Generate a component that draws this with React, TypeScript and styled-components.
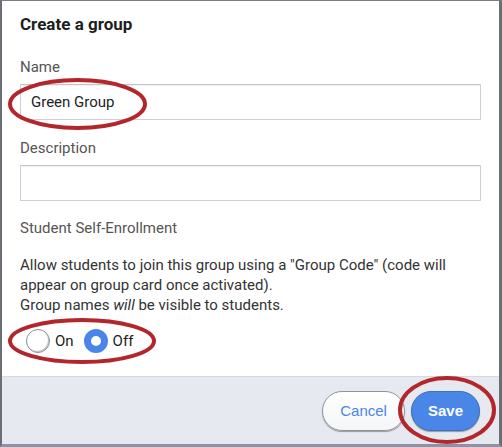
import React, { useState } from "react";
import styled, { createGlobalStyle } from "styled-components";

const GlobalStyle = createGlobalStyle`
  html, body {
    margin: 0;
    padding: 0;
    background: #fff;
  }
  body {
    font-family: Roboto, "Liberation Sans", Arial, sans-serif;
  }
`;

const Frame = styled.div`
  position: relative;
  width: 502px;
  height: 447px;
  box-sizing: border-box;
  border-top: 1px solid #7a7e84;
  border-left: 2px solid #6b6f75;
  border-right: 3px solid #6b6f75;
  border-bottom: 3px solid #8a94a8;
  display: flex;
  flex-direction: column;
  background: #fff;
  overflow: hidden;
`;

const Body = styled.div`
  flex: 1;
  padding: 12px 18px 0 18px;
  display: flex;
  flex-direction: column;
`;

const Title = styled.h2`
  margin: 0;
  font-size: 17px;
  font-weight: 700;
  color: #1e1e1e;
  line-height: 22px;
`;

const Label = styled.div<{ $top: number }>`
  margin-top: ${(p) => p.$top}px;
  font-size: 15px;
  color: #555;
  line-height: 18px;
`;

const Input = styled.input`
  box-sizing: border-box;
  margin-top: 8px;
  width: 461px;
  height: 36px;
  padding: 0 10px;
  border: 1px solid #cfcfcf;
  border-top-color: #c4c4c4;
  box-shadow: inset 0 1px 1px rgba(0, 0, 0, 0.06);
  border-radius: 1px;
  font-family: Roboto, "Liberation Sans", Arial, sans-serif;
  font-size: 15px;
  color: #222;
  outline: none;
`;

const Paragraph = styled.p`
  margin: 18px 0 0 0;
  font-size: 15px;
  line-height: 20px;
  color: #333;
`;

const RadioRow = styled.div`
  margin-top: 14px;
  display: flex;
  align-items: center;
  padding-left: 6px;
`;

const RadioOption = styled.label`
  display: flex;
  align-items: center;
  gap: 5px;
  margin-right: 10px;
  font-size: 15px;
  color: #222;
  cursor: pointer;
`;

const RadioCircle = styled.span<{ $checked: boolean }>`
  box-sizing: border-box;
  width: 24px;
  height: 24px;
  border-radius: 50%;
  background: #fff;
  border: ${(p) => (p.$checked ? "7px solid #4a86e8" : "1px solid #8a8e96")};
  box-shadow: ${(p) => (p.$checked ? "none" : "inset -1px -1px 1px rgba(0,0,0,0.25)")};
`;

const Footer = styled.div`
  height: 67px;
  flex: none;
  background: #e6e9f0;
  border-top: 1px solid #d6d9e0;
  display: flex;
  align-items: center;
  justify-content: flex-end;
  padding-right: 19px;
  gap: 6px;
`;

const Button = styled.button<{ $primary?: boolean }>`
  height: 40px;
  border-radius: 20px;
  padding: 0 ${(p) => (p.$primary ? 16 : 17)}px;
  font-family: "Liberation Sans", Arial, sans-serif;
  font-size: 15px;
  font-weight: ${(p) => (p.$primary ? 700 : 400)};
  color: ${(p) => (p.$primary ? "#fff" : "#4a86e8")};
  background: ${(p) => (p.$primary ? "#4a86e8" : "linear-gradient(#ffffff, #f4f5f7)")};
  border: 1px solid ${(p) => (p.$primary ? "#3f6fbf" : "#8f949c")};
  box-shadow: 0 1px 1px rgba(0, 0, 0, 0.35);
  cursor: pointer;
`;

const Annotation = styled.svg`
  position: absolute;
  pointer-events: none;
  overflow: visible;
`;

const Ring: React.FC<{ x: number; y: number; w: number; h: number }> = ({ x, y, w, h }) => (
  <Annotation style={{ left: x, top: y }} width={w} height={h}>
    <ellipse cx={w / 2} cy={h / 2} rx={w / 2 - 2} ry={h / 2 - 2} fill="none" stroke="#b3272c" strokeWidth={4} />
  </Annotation>
);

export default function App() {
  const [name, setName] = useState("Green Group");
  const [desc, setDesc] = useState("");
  const [enroll, setEnroll] = useState(false);

  return (
    <>
      <GlobalStyle />
      <Frame>
        <Body>
          <Title>Create a group</Title>
          <Label $top={23}>Name</Label>
          <Input value={name} onChange={(e) => setName(e.target.value)} />
          <Label $top={19}>Description</Label>
          <Input value={desc} onChange={(e) => setDesc(e.target.value)} />
          <Label $top={18}>Student Self-Enrollment</Label>
          <Paragraph>
            Allow students to join this group using a "Group Code" (code will appear on group card once activated).
            <br />
            Group names <i>will</i> be visible to students.
          </Paragraph>
          <RadioRow>
            <RadioOption onClick={() => setEnroll(true)}>
              <RadioCircle $checked={enroll} />
              On
            </RadioOption>
            <RadioOption onClick={() => setEnroll(false)}>
              <RadioCircle $checked={!enroll} />
              Off
            </RadioOption>
          </RadioRow>
        </Body>
        <Footer>
          <Button>Cancel</Button>
          <Button $primary>Save</Button>
        </Footer>
        <Ring x={6} y={77} w={139} h={52} />
        <Ring x={6} y={317} w={148} h={46} />
        <Ring x={396} y={375} w={98} h={68} />
      </Frame>
    </>
  );
}
